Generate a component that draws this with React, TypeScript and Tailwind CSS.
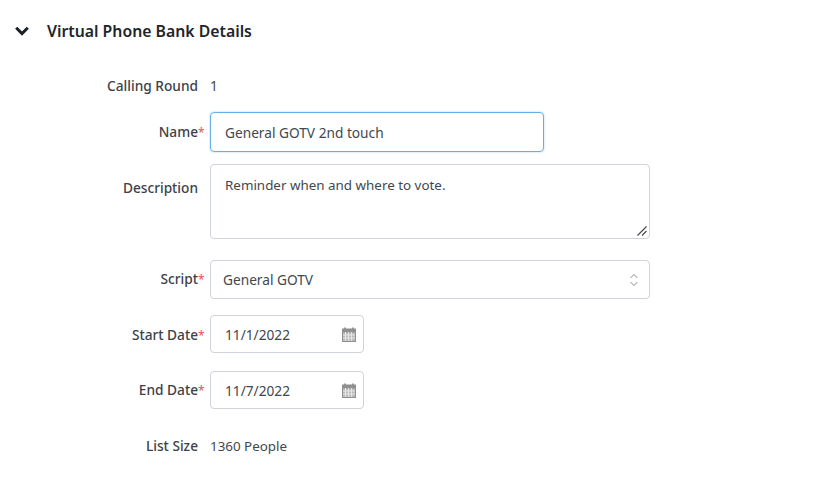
import { ReactNode } from 'react'

function Label({ text, required }: { text: string; required?: boolean }) {
  return (
    <div className={required ? 'w-[210px] shrink-0 pr-[7px] text-right font-medium text-[#3c4248]' : 'w-[210px] shrink-0 pr-[12px] text-right font-medium text-[#3c4248]'}>
      {text}
      {required && <span className="inline-block w-[5px] text-left text-[12px] font-normal text-[#e8505b]">*</span>}
    </div>
  )
}

function Row({ children, className }: { children: ReactNode; className: string }) {
  return <div className={'flex items-center ' + className}>{children}</div>
}

function CalendarIcon() {
  return (
    <svg width="14" height="15" viewBox="0 0 14 15">
      <path d="M3 0.5 V3 M11 0.5 V3" stroke="#8a8a8a" strokeWidth="1.6" />
      <rect x="0" y="1.5" width="14" height="3.5" fill="#8f8f8f" />
      <rect x="0.5" y="5" width="13" height="9.5" fill="#bdbdbd" stroke="#8f8f8f" />
      <path d="M3.5 5 V14 M6.5 5 V14 M9.5 5 V14 M1 8 H13 M1 11 H13" stroke="#eeeeee" strokeWidth="0.8" />
    </svg>
  )
}

function DateBox({ value }: { value: string }) {
  return (
    <div className="w-[154px] h-[38px] flex items-center justify-between pl-[14px] pr-[7px] border border-[#ced4da] rounded-[4px] text-[#3f464c]">
      <span className="pt-[2px]">{value}</span>
      <CalendarIcon />
    </div>
  )
}

export default function App() {
  return (
    <div className="w-[820px] h-[501px] bg-white overflow-hidden font-['Noto_Sans','Open_Sans',sans-serif] text-[13.7px] leading-[20px] text-[#41484e]">
      <div className="flex items-center pl-[15px] pt-[20px] h-[42px]">
        <svg width="14" height="10" viewBox="0 0 14 10" fill="none" stroke="#1b2127" strokeWidth="3">
          <path d="M1.2 1.8 L7 7.6 L12.8 1.8" />
        </svg>
        <div className="ml-[18px] text-[15.8px] font-semibold text-[#212529]">Virtual Phone Bank Details</div>
      </div>

      <Row className="mt-[34px]">
        <Label text="Calling Round" />
        <div>1</div>
      </Row>

      <Row className="mt-[16px]">
        <Label text="Name" required />
        <div className="w-[334px] h-[40px] flex items-center pl-[14px] pt-[1px] border border-[#66afe9] rounded-[4px] shadow-[0_0_2px_rgba(102,175,233,0.6)]">
          General GOTV 2nd touch
        </div>
      </Row>

      <div className="flex mt-[12px]">
        <div className="pt-[14px]">
          <Label text="Description" />
        </div>
        <div className="relative w-[440px] h-[75px] pl-[14px] pt-[10px] border border-[#ced4da] rounded-[4px] text-[13.4px]">
          Reminder when and where to vote.
          <svg className="absolute right-[1px] bottom-[1px]" width="12" height="12" viewBox="0 0 12 12">
            <path d="M1.5 10.5 L10.5 1.5 M6 10.5 L10.5 6" stroke="#4b4b4b" strokeWidth="1.2" fill="none" />
          </svg>
        </div>
      </div>

      <Row className="mt-[21px]">
        <Label text="Script" required />
        <div className="w-[440px] h-[39px] flex items-center justify-between pl-[12px] pr-[10px] pt-[1px] border border-[#ced4da] rounded-[4px]">
          <span>General GOTV</span>
          <svg width="10" height="14" viewBox="0 0 10 14" fill="none" stroke="#8a9096" strokeWidth="1">
            <path d="M1.5 5 L5 1.5 L8.5 5 M1.5 9 L5 12.5 L8.5 9" />
          </svg>
        </div>
      </Row>

      <Row className="mt-[16px]">
        <div className="pt-[2px]">
          <Label text="Start Date" required />
        </div>
        <DateBox value="11/1/2022" />
      </Row>

      <Row className="mt-[18px]">
        <Label text="End Date" required />
        <DateBox value="11/7/2022" />
      </Row>

      <Row className="mt-[27px]">
        <Label text="List Size" />
        <div className="text-[13.4px]">1360 People</div>
      </Row>
    </div>
  )
}
